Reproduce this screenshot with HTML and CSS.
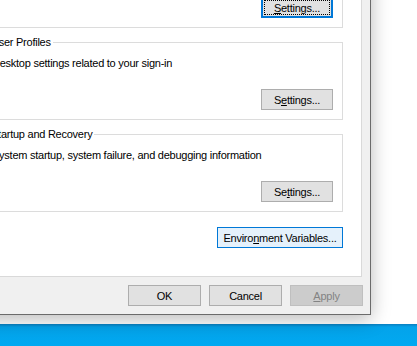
FILE: index.html
```html
<!DOCTYPE html>
<html lang="en">
<head>
    <meta charset="UTF-8">
    <meta name="viewport" content="width=device-width, initial-scale=1.0">
    <title>System Properties</title>
    <link rel="stylesheet" href="styles.css">
</head>
<body>

    <div class="desktop">
        <!-- System Properties dialog, Advanced tab -->
        <div class="window">
            <div class="page">

                <div class="group">
                    <span class="legend">Performance</span>
                    <p class="desc">Visual effects, processor scheduling, memory usage, and virtual memory</p>
                    <button class="btn set focus"><u>S</u>ettings...</button>
                </div>

                <div class="group">
                    <span class="legend">User Profiles</span>
                    <p class="desc">Desktop settings related to your sign-in</p>
                    <button class="btn set">S<u>e</u>ttings...</button>
                </div>

                <div class="group">
                    <span class="legend">Startup and Recovery</span>
                    <p class="desc">System startup, system failure, and debugging information</p>
                    <button class="btn set">Se<u>t</u>tings...</button>
                </div>

                <div class="env-row">
                    <button class="btn env">Enviro<u>n</u>ment Variables...</button>
                </div>
            </div>

            <div class="footer">
                <button class="btn">OK</button>
                <button class="btn">Cancel</button>
                <button class="btn" disabled><u>A</u>pply</button>
            </div>
        </div>
    </div>

    <div class="taskbar"></div>

</body>
</html>
```

FILE: styles.css
```css
* {
    box-sizing: border-box;
}
body {
    margin: 0;
    width: 417px;
    height: 346px;
    overflow: hidden;
    display: flex;
    flex-direction: column;
    background: #fff;
    color: #000;
    font-family: "Liberation Sans", Arial, sans-serif;
    font-size: 11px;
    letter-spacing: -0.25px;
}
.desktop {
    flex: 1;
    position: relative;
}
.window {
    position: absolute;
    left: -40px;
    top: -70px;
    width: 411px;
    height: 385px;
    display: flex;
    flex-direction: column;
    background: #f0f0f0;
    border-right: 1px solid #6b6b6b;
    border-bottom: 1px solid #6b6b6b;
    box-shadow: 0 4px 18px rgba(0, 0, 0, 0.28);
}
.page {
    flex: 1;
    margin: 0 8px;
    padding: 19px 18px 0 9px;
    display: flex;
    flex-direction: column;
    gap: 14px;
    background: #fff;
    border: 1px solid #d9d9d9;
}
.group {
    position: relative;
    height: 78px;
    padding: 14px 9px 0 13px;
    display: flex;
    flex-direction: column;
    border: 1px solid #dcdcdc;
}
.legend {
    position: absolute;
    top: -7px;
    left: 10px;
    padding: 0 2px;
    line-height: 13px;
    background: #fff;
}
.desc {
    margin: 0;
    line-height: 13px;
    white-space: nowrap;
}
.btn {
    width: 73px;
    height: 21px;
    padding: 0;
    font: inherit;
    letter-spacing: inherit;
    color: #000;
    background: #e1e1e1;
    border: 1px solid #adadad;
}
.btn u {
    text-underline-offset: 1px;
}
.set {
    width: 72px;
    margin-top: 19px;
    align-self: flex-end;
}
.focus {
    border-color: #0078d7;
    box-shadow: inset 0 0 0 1px #0078d7;
    outline: 1px dotted #000;
    outline-offset: -4px;
}
.env-row {
    margin-top: 1px;
    display: flex;
    justify-content: flex-end;
}
.env {
    width: 126px;
    background: #e5f1fb;
    border-color: #0078d7;
}
.btn:disabled {
    color: #838383;
    background: #cccccc;
    border-color: #bfbfbf;
}
.footer {
    flex: none;
    height: 37px;
    padding: 8px 7px 0 0;
    display: flex;
    justify-content: flex-end;
    gap: 8px;
}
.taskbar {
    flex: none;
    height: 22px;
    background: linear-gradient(#0b7fc0, #04a3ea 3px, #01a9f1);
}
```
